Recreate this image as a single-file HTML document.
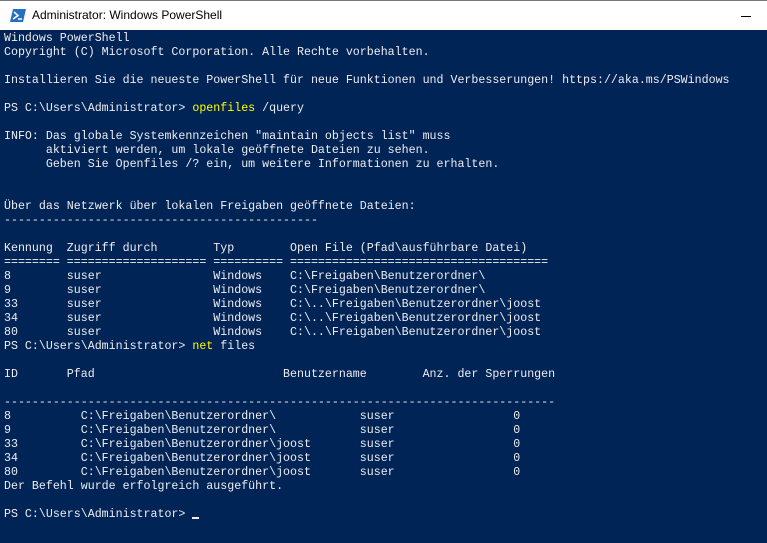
<!DOCTYPE html>
<html><head><meta charset="utf-8"><style>
html,body{margin:0;padding:0;width:767px;height:543px;overflow:hidden;background:#012456}
#tb{position:absolute;left:0;top:0;width:767px;height:30px;background:#fff;border-top:1px solid #777;box-sizing:border-box}
#tb .t{position:absolute;left:32px;top:7px;font:12px "Liberation Sans",sans-serif;color:#000}
#tb .min{position:absolute;left:741px;top:15px;width:10px;height:1px;background:#000}
#c{position:absolute;left:4px;top:32px;font:11.63px/14px "Liberation Mono",monospace;color:#eeedf0;white-space:pre;margin:0}
.y{color:#ffff00}
.cur{display:inline-block;width:7px;height:2px;background:#eeedf0;vertical-align:-2px}
</style></head><body>
<div id="tb"><svg style="position:absolute;left:10px;top:8px" width="16" height="13" viewBox="0 0 16 13"><path d="M3 0H16L13 13H0Z" fill="#2671be"/><path d="M4 3L8 6.5L3 10" stroke="#fff" stroke-width="1.5" fill="none"/><path d="M8 10H12" stroke="#fff" stroke-width="1.5"/></svg><span class="t">Administrator: Windows PowerShell</span><div class="min"></div></div>
<pre id="c">Windows PowerShell
Copyright (C) Microsoft Corporation. Alle Rechte vorbehalten.

Installieren Sie die neueste PowerShell für neue Funktionen und Verbesserungen! https://aka.ms/PSWindows

PS C:\Users\Administrator> <span class="y">openfiles</span> /query

INFO: Das globale Systemkennzeichen "maintain objects list" muss
      aktiviert werden, um lokale geöffnete Dateien zu sehen.
      Geben Sie Openfiles /? ein, um weitere Informationen zu erhalten.


Über das Netzwerk über lokalen Freigaben geöffnete Dateien:
---------------------------------------------

Kennung  Zugriff durch        Typ        Open File (Pfad\ausführbare Datei)
======== ==================== ========== =====================================
8        suser                Windows    C:\Freigaben\Benutzerordner\
9        suser                Windows    C:\Freigaben\Benutzerordner\
33       suser                Windows    C:\..\Freigaben\Benutzerordner\joost
34       suser                Windows    C:\..\Freigaben\Benutzerordner\joost
80       suser                Windows    C:\..\Freigaben\Benutzerordner\joost
PS C:\Users\Administrator> <span class="y">net</span> files

ID       Pfad                           Benutzername        Anz. der Sperrungen

-------------------------------------------------------------------------------
8          C:\Freigaben\Benutzerordner\            suser                 0
9          C:\Freigaben\Benutzerordner\            suser                 0
33         C:\Freigaben\Benutzerordner\joost       suser                 0
34         C:\Freigaben\Benutzerordner\joost       suser                 0
80         C:\Freigaben\Benutzerordner\joost       suser                 0
Der Befehl wurde erfolgreich ausgeführt.

PS C:\Users\Administrator> <span class="cur"></span></pre>
</body></html>
